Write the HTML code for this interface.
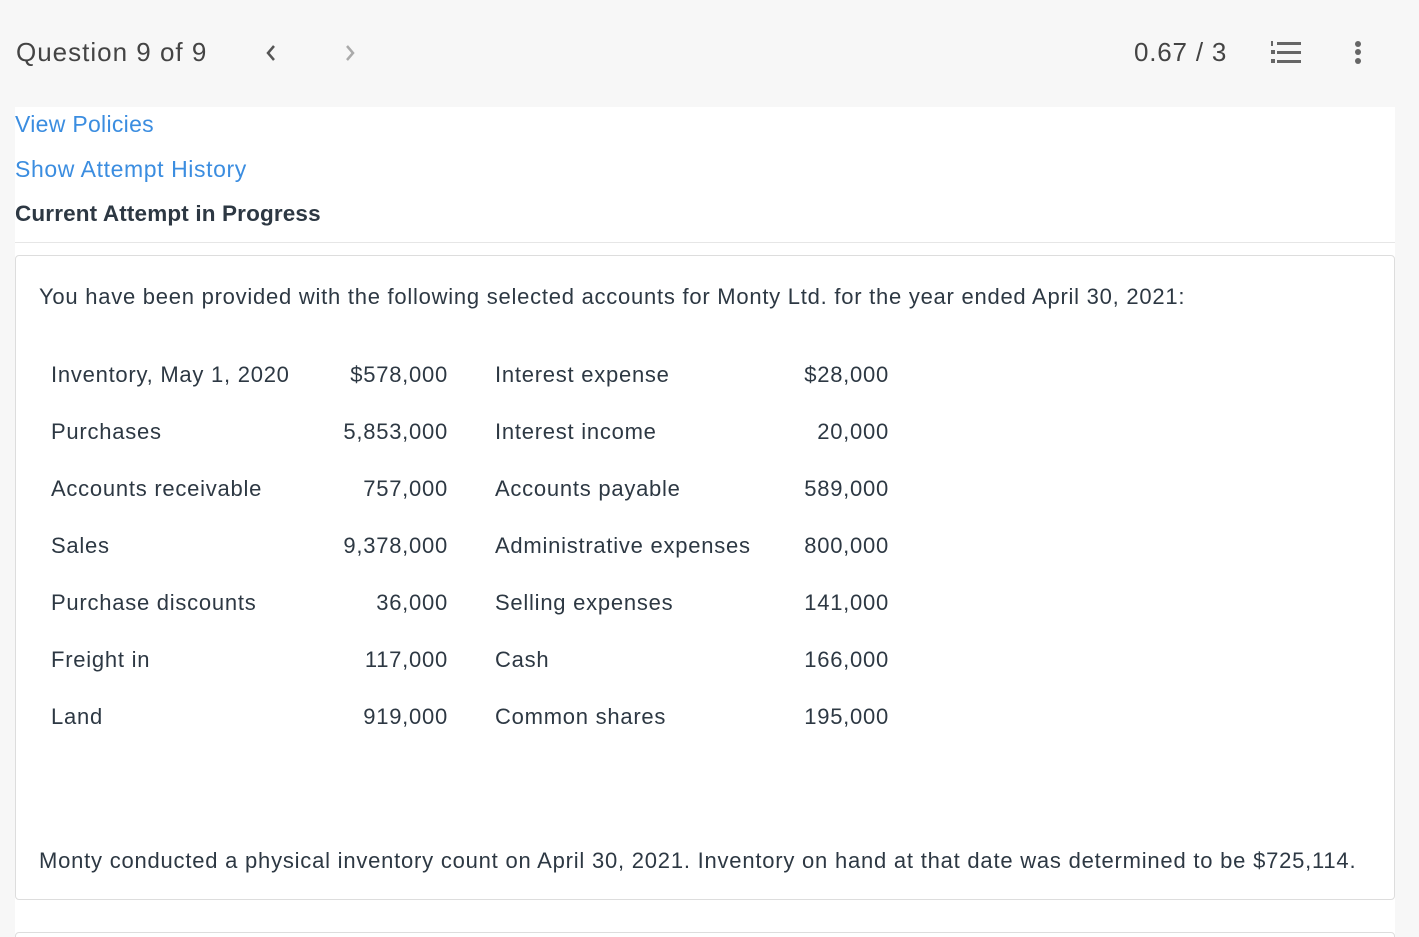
<!DOCTYPE html>
<html><head><meta charset="utf-8"><style>
html,body{margin:0;width:1419px;height:937px;overflow:hidden}
body{background:#f7f7f7;font-family:"Liberation Sans",sans-serif;color:#333;position:relative}
.a{position:absolute;white-space:nowrap}
.w{position:absolute;left:15px;top:107px;width:1380px;height:830px;background:#fff}
.card{position:absolute;left:15px;top:255px;width:1378px;height:643px;border:1px solid #ddd;border-radius:4px;background:#fff}
.card2{position:absolute;left:15px;top:932px;width:1378px;height:20px;border:1px solid #ddd;border-radius:4px}
.t{font-size:22px;color:#2d3843;letter-spacing:0.75px}
.r{text-align:right}
</style></head><body>
<div class="a" style="left:16px;top:37px;font-size:26px;color:#444;letter-spacing:1px">Question 9 of 9</div>
<svg class="a" style="left:264px;top:43px" width="14" height="20"><path d="M10 3 L4 10 L10 17" stroke="#555" stroke-width="2.5" fill="none"/></svg>
<svg class="a" style="left:343px;top:43px" width="14" height="20"><path d="M4 3 L10 10 L4 17" stroke="#aaa" stroke-width="2.5" fill="none"/></svg>
<div class="a" style="left:1134px;top:37px;font-size:26px;color:#444;letter-spacing:0.8px">0.67 / 3</div>
<svg class="a" style="left:1270px;top:40px" width="32" height="26"><g fill="#666"><rect x="1" y="1" width="2" height="5"/><rect x="1" y="10" width="4" height="4"/><rect x="1" y="19" width="4" height="4"/><rect x="7" y="2" width="24" height="3"/><rect x="7" y="11" width="24" height="3"/><rect x="7" y="20" width="24" height="3"/></g></svg>
<svg class="a" style="left:1352px;top:40px" width="12" height="26"><g fill="#666"><circle cx="6" cy="4" r="3"/><circle cx="6" cy="12" r="3"/><circle cx="6" cy="21" r="3"/></g></svg>
<div class="w"></div>
<div class="a" style="left:15px;top:111px;font-size:23px;color:#3b8de0;letter-spacing:0.3px">View Policies</div>
<div class="a" style="left:15px;top:156px;font-size:23px;color:#3b8de0;letter-spacing:0.6px">Show Attempt History</div>
<div class="a" style="left:15px;top:201px;font-size:22.5px;font-weight:bold;color:#2d3843;letter-spacing:0.15px">Current Attempt in Progress</div>
<div class="a" style="left:15px;top:242px;width:1380px;height:1px;background:#e6e6e6"></div>
<div class="card"></div>
<div class="card2"></div>
<div class="a t" style="left:39px;top:284px">You have been provided with the following selected accounts for Monty Ltd. for the year ended April 30, 2021:</div>
<div class="a t" style="left:51px;top:346px;line-height:57px">Inventory, May 1, 2020<br>Purchases<br>Accounts receivable<br>Sales<br>Purchase discounts<br>Freight in<br>Land</div>
<div class="a t r" style="left:290px;width:158px;top:346px;line-height:57px">$578,000<br>5,853,000<br>757,000<br>9,378,000<br>36,000<br>117,000<br>919,000</div>
<div class="a t" style="left:495px;top:346px;line-height:57px">Interest expense<br>Interest income<br>Accounts payable<br>Administrative expenses<br>Selling expenses<br>Cash<br>Common shares</div>
<div class="a t r" style="left:770px;width:119px;top:346px;line-height:57px">$28,000<br>20,000<br>589,000<br>800,000<br>141,000<br>166,000<br>195,000</div>
<div class="a t" style="left:39px;top:848px;letter-spacing:0.78px">Monty conducted a physical inventory count on April 30, 2021. Inventory on hand at that date was determined to be $725,114.</div>
</body></html>
